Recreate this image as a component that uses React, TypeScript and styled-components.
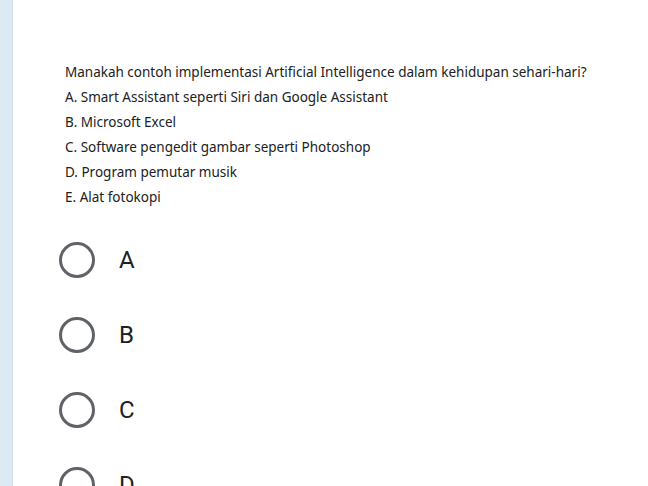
import styled, { createGlobalStyle } from "styled-components";

const GlobalStyle = createGlobalStyle`
  html, body {
    margin: 0;
    padding: 0;
    background: #ffffff;
  }
`;

const Page = styled.div`
  display: flex;
  height: 486px;
  overflow: hidden;
`;

const SideStrip = styled.div`
  width: 12px;
  flex-shrink: 0;
  background: #dbeaf3;
  border-right: 1px solid #d2e2ec;
`;

const Content = styled.div`
  flex: 1;
  padding: 60px 0 0 46px;
`;

const Question = styled.div`
  font-family: "Noto Sans", "Open Sans", sans-serif;
  font-size: 13.5px;
  color: #202124;
  padding-left: 6px;
`;

const Line = styled.div`
  height: 25px;
  line-height: 25px;
`;

const Options = styled.div`
  display: flex;
  flex-direction: column;
  gap: 39px;
  margin-top: 32px;
`;

const Option = styled.label`
  display: flex;
  align-items: center;
  gap: 24px;
  height: 36px;
`;

const Radio = styled.span`
  width: 36px;
  height: 36px;
  box-sizing: border-box;
  border: 3px solid #5f6368;
  border-radius: 50%;
`;

const Letter = styled.span`
  font-family: Roboto, "Liberation Sans", sans-serif;
  font-size: 24px;
  color: #202124;
`;

const lines = [
  "Manakah contoh implementasi Artificial Intelligence dalam kehidupan sehari-hari?",
  "A. Smart Assistant seperti Siri dan Google Assistant",
  "B. Microsoft Excel",
  "C. Software pengedit gambar seperti Photoshop",
  "D. Program pemutar musik",
  "E. Alat fotokopi",
];

export default function App() {
  return (
    <>
      <GlobalStyle />
      <Page>
        <SideStrip />
        <Content>
          <Question>
            {lines.map((l) => (
              <Line key={l}>{l}</Line>
            ))}
          </Question>
          <Options>
            {["A", "B", "C", "D"].map((o) => (
              <Option key={o}>
                <Radio />
                <Letter>{o}</Letter>
              </Option>
            ))}
          </Options>
        </Content>
      </Page>
    </>
  );
}
